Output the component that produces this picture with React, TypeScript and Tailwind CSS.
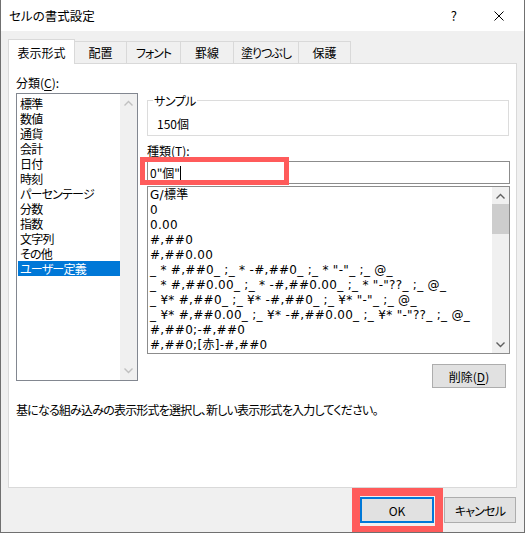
const FONT = "font-['Noto_Sans_CJK_JP',sans-serif] [font-feature-settings:'palt']";

const categories = [
  "標準",
  "数値",
  "通貨",
  "会計",
  "日付",
  "時刻",
  "パーセンテージ",
  "分数",
  "指数",
  "文字列",
  "その他",
  "ユーザー定義",
];

const formats = [
  "G/標準",
  "0",
  "0.00",
  "#,##0",
  "#,##0.00",
  '_ * #,##0_ ;_ * -#,##0_ ;_ * "-"_ ;_ @_',
  '_ * #,##0.00_ ;_ * -#,##0.00_ ;_ * "-"??_ ;_ @_',
  '_ ¥* #,##0_ ;_ ¥* -#,##0_ ;_ ¥* "-"_ ;_ @_',
  '_ ¥* #,##0.00_ ;_ ¥* -#,##0.00_ ;_ ¥* "-"??_ ;_ @_',
  "#,##0;-#,##0",
  "#,##0;[赤]-#,##0",
];

const tabs = [
  { label: "配置", cls: "w-[52px]" },
  { label: "フォント", cls: "w-[54px] tracking-[-1px]" },
  { label: "罫線", cls: "w-[53px]" },
  { label: "塗りつぶし", cls: "w-[65px] tracking-[-1px]" },
  { label: "保護", cls: "w-[52px]" },
];

function Chevron({ up, color }: { up?: boolean; color: string }) {
  return (
    <svg width="9" height="6" viewBox="0 0 9 6" fill="none">
      <polyline
        points={up ? "0.5,5.5 4.5,1.5 8.5,5.5" : "0.5,0.5 4.5,4.5 8.5,0.5"}
        stroke={color}
        strokeWidth="1.4"
      />
    </svg>
  );
}

export default function App() {
  return (
    <div
      className={`relative w-[525px] h-[533px] overflow-hidden border-x border-b border-[#707070] bg-[#f0f0f0] text-[12px] leading-[15px] text-black ${FONT}`}
    >
      {/* title bar */}
      <div className="h-[31px] bg-white flex items-center pl-[8px]">
        <span className="flex-1 text-[12.5px]">セルの書式設定</span>
        <span className="text-[13px]">?</span>
        <svg className="ml-[37px] mr-[20px]" width="10" height="10" viewBox="0 0 10 10">
          <path d="M0.5 0.5 L9.5 9.5 M9.5 0.5 L0.5 9.5" stroke="#000" strokeWidth="1" />
        </svg>
      </div>

      {/* tabs */}
      <div className="flex items-end pl-[7px] pt-[8px]">
        <div className="relative z-10 -mb-px h-[25px] w-[67px] bg-white border-x border-t border-[#d9d9d9] flex items-center justify-center">
          表示形式
        </div>
        {tabs.map((t) => (
          <div
            key={t.label}
            className={`h-[22px] ${t.cls} border-t border-r border-[#d9d9d9] bg-[#f0f0f0] flex items-center justify-center`}
          >
            {t.label}
          </div>
        ))}
      </div>

      {/* panel */}
      <div className="ml-[7px] w-[509px] h-[425px] bg-white border border-[#d9d9d9] pt-[11px] pl-[7px]">
        <div className="flex gap-[9px]">
          {/* left column */}
          <div className="w-[122px]">
            <div className="h-[15px]">
              分類(<span className="underline underline-offset-2">C</span>):
            </div>
            <div className="mt-[3px] h-[288px] border border-[#828790] bg-white flex">
              <div className="flex-1 pt-[2px] pl-[1px] tracking-[-0.8px]">
                {categories.map((c) => (
                  <div
                    key={c}
                    className={`h-[15px] pl-[2px] ${c === "ユーザー定義" ? "bg-[#0078d7] text-white" : ""}`}
                  >
                    {c}
                  </div>
                ))}
              </div>
              <div className="w-[17px] bg-[#f0f0f0] flex flex-col justify-between items-center py-[6px]">
                <Chevron up color="#c0c0c0" />
                <Chevron color="#c0c0c0" />
              </div>
            </div>
          </div>

          {/* right column */}
          <div className="w-[363px] flex flex-col">
            <fieldset className="mt-[18px] w-[362px] border border-[#dcdcdc] pb-[4px]">
              <legend className="ml-[5px] px-[1px] leading-[15px] tracking-[-0.5px]">サンプル</legend>
              <div className="pt-[8px] pl-[9px]">150個</div>
            </fieldset>
            <div className="mt-[7px] h-[15px]">
              種類(<span className="underline underline-offset-2">T</span>):
            </div>
            <div className="mt-[3px] h-[23px] border border-[#8c8c8c] bg-white pl-[2px] flex items-center">
              <span>0"個"</span>
              <span className="w-px h-[14px] bg-black" />
            </div>
            <div className="mt-[2px] h-[168px] border border-[#8c8c8c] bg-white flex">
              <div className="flex-1 pt-[1px] pl-[2px] overflow-hidden whitespace-nowrap font-['DejaVu_Sans','Noto_Sans_CJK_JP',sans-serif] text-[12px] tracking-[0.3px]">
                {formats.map((f) => (
                  <div key={f} className="h-[15px]">
                    {f}
                  </div>
                ))}
              </div>
              <div className="w-[17px] bg-[#f0f0f0] flex flex-col">
                <div className="h-[17px] flex items-center justify-center">
                  <Chevron up color="#606060" />
                </div>
                <div className="h-[30px] bg-[#cdcdcd]" />
                <div className="flex-1" />
                <div className="h-[17px] flex items-center justify-center">
                  <Chevron color="#606060" />
                </div>
              </div>
            </div>
            <button className="mt-[10px] self-end mr-[4px] w-[74px] h-[24px] bg-[#e1e1e1] border border-[#adadad]">
              削除(<span className="underline underline-offset-2">D</span>)
            </button>
          </div>
        </div>
        <div className="mt-[14px] tracking-[-0.8px]">
          基になる組み込みの表示形式を選択し、新しい表示形式を入力してください。
        </div>
      </div>

      {/* footer */}
      <div className="flex justify-end gap-[10px] pr-[8px] mt-[9px]">
        <button className="w-[74px] h-[26px] bg-[#e1e1e1] border-2 border-[#0078d7]">OK</button>
        <button className="w-[72px] h-[26px] bg-[#e1e1e1] border border-[#adadad] tracking-[-0.8px]">
          キャンセル
        </button>
      </div>

      {/* annotation boxes */}
      <div className="absolute left-[139px] top-[157px] w-[149px] h-[28px] border-[5px] border-[#ff5b5b]" />
      <div className="absolute left-[351px] top-[488px] w-[91px] h-[46px] border-[8px] border-[#ff5b5b]" />
    </div>
  );
}
